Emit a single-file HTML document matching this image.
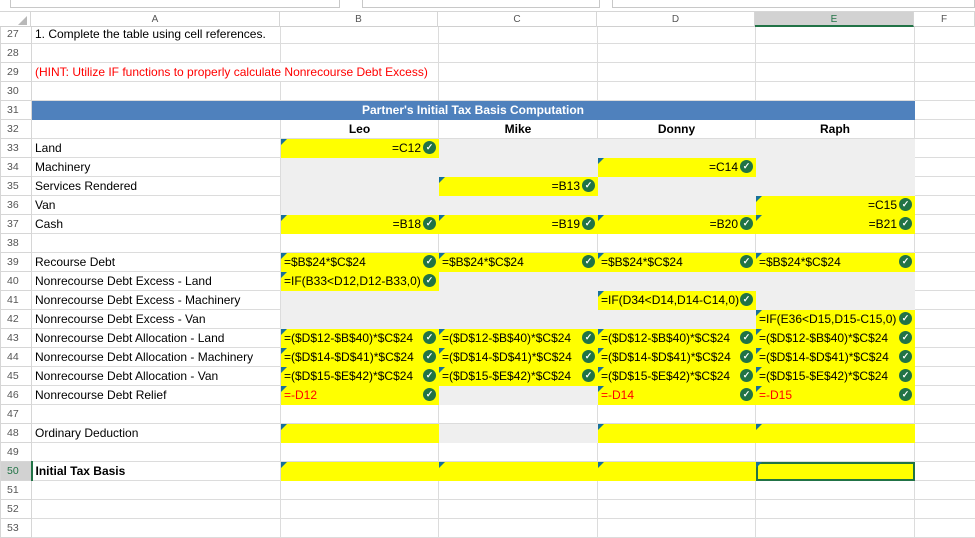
<!DOCTYPE html>
<html><head><meta charset="utf-8"><style>
*{box-sizing:border-box;margin:0;padding:0}
body{width:975px;height:530px;overflow:hidden;background:#fff;font-family:"Liberation Sans",Arial,sans-serif;font-size:12px;color:#000;position:relative}
.top{position:absolute;top:0;left:0;width:975px;height:12px;background:#fff;border-bottom:1px solid #d6d6d6;z-index:3}
.box{position:absolute;top:-2px;height:10px;border:1px solid #c8c8c8;background:#fff}
.hdr{position:absolute;top:12px;left:0;height:15px;width:975px;background:#fff;border-bottom:1px solid #d0d0d0;z-index:3}
.ch{position:absolute;top:0;height:15px;border-right:1px solid #d6d6d6;text-align:center;color:#555;font-size:10px;line-height:15px}
table{position:absolute;top:24px;left:0;width:975px;border-collapse:collapse;table-layout:fixed}
tr{height:19px}
td{height:19px;border:1px solid #dcdcdc;padding:0 3px;white-space:nowrap;overflow:visible;position:relative;line-height:17px}
td.rh{color:#555;text-align:left;font-size:10.5px;padding-left:6px;border-color:#d6d6d6;background:#fff}
.g{background:#efefef;border-color:#efefef}
.y{background:#ffff00;border-color:#ffff00}
.r{text-align:right;padding-right:17px}
.t::before{content:"";position:absolute;left:0;top:0;border-top:6px solid #17709a;border-right:6px solid transparent}
.c::after{content:"✓";position:absolute;right:2px;top:2px;width:13px;height:13px;border-radius:50%;background:#217346;color:#fff;font-size:9px;line-height:13px;text-align:center;font-weight:bold}
.red{color:#f00}
.b{font-weight:bold}
</style></head><body>
<div class="top"><div class="box" style="left:10px;width:330px"></div><div class="box" style="left:362px;width:238px"></div><div class="box" style="left:612px;width:363px"></div></div>
<div class="hdr">
<div class="ch" style="left:0;width:31px"><div style="position:absolute;right:3px;bottom:2px;border-bottom:9px solid #b8b8b8;border-left:9px solid transparent"></div></div>
<div class="ch" style="left:31px;width:249px">A</div>
<div class="ch" style="left:280px;width:158px">B</div>
<div class="ch" style="left:438px;width:159px">C</div>
<div class="ch" style="left:597px;width:158px">D</div>
<div class="ch" style="left:755px;width:159px;background:#d2d2d2;border-bottom:2px solid #217346;color:#217346">E</div>
<div class="ch" style="left:914px;width:61px">F</div>
</div>
<table>
<colgroup><col style="width:31px"><col style="width:249px"><col style="width:158px"><col style="width:159px"><col style="width:158px"><col style="width:159px"><col style="width:61px"></colgroup>
<tr><td class="rh" style="line-height:17px">27</td><td style="line-height:17px">1. Complete the table using cell references.</td><td></td><td></td><td></td><td></td><td></td></tr>
<tr><td class="rh">28</td><td></td><td></td><td></td><td></td><td></td><td></td></tr>
<tr><td class="rh">29</td><td class="red" style="border-right:none;z-index:1">(HINT: Utilize IF functions to properly calculate Nonrecourse Debt Excess)</td><td style="border-left:none"></td><td></td><td></td><td></td><td></td></tr>
<tr><td class="rh">30</td><td></td><td></td><td></td><td></td><td></td><td></td></tr>
<tr><td class="rh">31</td><td colspan="5" style="background:#4f81bd;border-color:#4f81bd;color:#fff;font-weight:bold;text-align:center">Partner's Initial Tax Basis Computation</td><td></td></tr>
<tr><td class="rh">32</td><td></td><td class="b" style="text-align:center">Leo</td><td class="b" style="text-align:center">Mike</td><td class="b" style="text-align:center">Donny</td><td class="b" style="text-align:center">Raph</td><td></td></tr>
<tr><td class="rh">33</td><td>Land</td><td class="y t c r">=C12</td><td class="g"></td><td class="g"></td><td class="g"></td><td></td></tr>
<tr><td class="rh">34</td><td>Machinery</td><td class="g"></td><td class="g"></td><td class="y t c r">=C14</td><td class="g"></td><td></td></tr>
<tr><td class="rh">35</td><td>Services Rendered</td><td class="g"></td><td class="y t c r">=B13</td><td class="g"></td><td class="g"></td><td></td></tr>
<tr><td class="rh">36</td><td>Van</td><td class="g"></td><td class="g"></td><td class="g"></td><td class="y t c r">=C15</td><td></td></tr>
<tr><td class="rh">37</td><td>Cash</td><td class="y t c r">=B18</td><td class="y t c r">=B19</td><td class="y t c r">=B20</td><td class="y t c r">=B21</td><td></td></tr>
<tr><td class="rh">38</td><td></td><td></td><td></td><td></td><td></td><td></td></tr>
<tr><td class="rh">39</td><td>Recourse Debt</td><td class="y t c">=$B$24*$C$24</td><td class="y t c">=$B$24*$C$24</td><td class="y t c">=$B$24*$C$24</td><td class="y t c">=$B$24*$C$24</td><td></td></tr>
<tr><td class="rh">40</td><td>Nonrecourse Debt Excess - Land</td><td class="y t c">=IF(B33&lt;D12,D12-B33,0)</td><td class="g"></td><td class="g"></td><td class="g"></td><td></td></tr>
<tr><td class="rh">41</td><td>Nonrecourse Debt Excess - Machinery</td><td class="g"></td><td class="g"></td><td class="y t c">=IF(D34&lt;D14,D14-C14,0)</td><td class="g"></td><td></td></tr>
<tr><td class="rh">42</td><td>Nonrecourse Debt Excess - Van</td><td class="g"></td><td class="g"></td><td class="g"></td><td class="y t c">=IF(E36&lt;D15,D15-C15,0)</td><td></td></tr>
<tr><td class="rh">43</td><td>Nonrecourse Debt Allocation - Land</td><td class="y t c">=($D$12-$B$40)*$C$24</td><td class="y t c">=($D$12-$B$40)*$C$24</td><td class="y t c">=($D$12-$B$40)*$C$24</td><td class="y t c">=($D$12-$B$40)*$C$24</td><td></td></tr>
<tr><td class="rh">44</td><td>Nonrecourse Debt Allocation - Machinery</td><td class="y t c">=($D$14-$D$41)*$C$24</td><td class="y t c">=($D$14-$D$41)*$C$24</td><td class="y t c">=($D$14-$D$41)*$C$24</td><td class="y t c">=($D$14-$D$41)*$C$24</td><td></td></tr>
<tr><td class="rh">45</td><td>Nonrecourse Debt Allocation - Van</td><td class="y t c">=($D$15-$E$42)*$C$24</td><td class="y t c">=($D$15-$E$42)*$C$24</td><td class="y t c">=($D$15-$E$42)*$C$24</td><td class="y t c">=($D$15-$E$42)*$C$24</td><td></td></tr>
<tr><td class="rh">46</td><td>Nonrecourse Debt Relief</td><td class="y t c red">=-D12</td><td class="g"></td><td class="y t c red">=-D14</td><td class="y t c red">=-D15</td><td></td></tr>
<tr><td class="rh">47</td><td></td><td></td><td></td><td></td><td></td><td></td></tr>
<tr><td class="rh">48</td><td>Ordinary Deduction</td><td class="y t"></td><td class="g"></td><td class="y t"></td><td class="y t"></td><td></td></tr>
<tr><td class="rh">49</td><td></td><td></td><td></td><td></td><td></td><td></td></tr>
<tr><td class="rh" style="color:#217346;border-right:2px solid #217346;background:#d2d2d2">50</td><td class="b">Initial Tax Basis</td><td class="y t"></td><td class="y t"></td><td class="y t"></td><td class="y t" style="outline:2px solid #217346;outline-offset:-2px"></td><td></td></tr>
<tr><td class="rh">51</td><td></td><td></td><td></td><td></td><td></td><td></td></tr>
<tr><td class="rh">52</td><td></td><td></td><td></td><td></td><td></td><td></td></tr>
<tr><td class="rh">53</td><td></td><td></td><td></td><td></td><td></td><td></td></tr>
</table>
</body></html>
